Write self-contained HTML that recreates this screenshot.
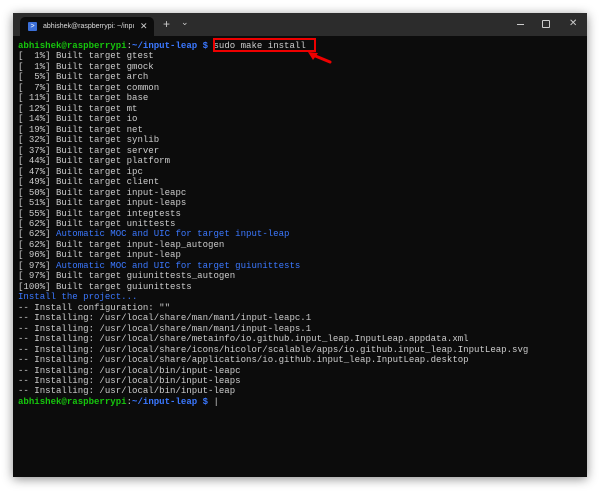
<!DOCTYPE html>
<html><head><style>
html,body{margin:0;padding:0;background:#fff;width:600px;height:492px;overflow:hidden}
.win{position:absolute;left:13px;top:13px;width:574px;height:464px;background:#0c0c0c;box-shadow:0 2px 10px rgba(0,0,0,.45);}
.tb{position:absolute;left:0;top:0;width:574px;height:23px;background:#2c2c2c}
.tab{position:absolute;left:7px;top:4px;width:134px;height:19px;background:#0c0c0c;border-radius:5px 5px 0 0;color:#ddd;font:7px "Liberation Sans",sans-serif;line-height:19px}
.tab .ic{position:absolute;left:8px;top:5px;width:9px;height:9px;background:#3b6fd8;border-radius:1px;color:#fff;font-size:7px;line-height:9px;text-align:center}
.tab .t{position:absolute;left:23px;top:0}
.tab .x{position:absolute;left:120px;top:0;font-size:9px;color:#ccc}
.plus{position:absolute;left:150px;top:4px;color:#ccc;font:12px "Liberation Sans",sans-serif}
.chev{position:absolute;left:168px;top:4px;color:#ccc;font:9px "Liberation Sans",sans-serif}
.ctl{position:absolute;color:#ccc;font:10px "Liberation Sans",sans-serif}
pre{position:absolute;left:5px;top:28px;margin:0;font:9.05px/10.47px "Liberation Mono",monospace;color:#cccccc}
.g{color:#16c60c;font-weight:bold}.b{color:#3b78ff;font-weight:bold}.bl{color:#3b78ff}
.box{position:absolute;left:213px;top:38px;width:103px;height:14px;border:2px solid #e00;box-sizing:border-box}
</style></head><body>
<div class="win">
<div class="tb">
<div class="tab"><div class="ic">&gt;</div><span class="t">abhishek@raspberrypi: ~/inpı</span><span class="x">✕</span></div>
<div class="plus">+</div><div class="chev">⌄</div>
<div style="position:absolute;left:504px;top:11px;width:7px;height:1px;background:#ccc"></div>
<div style="position:absolute;left:529px;top:7px;width:6px;height:6px;border:1px solid #ccc;border-radius:1px"></div>
<div class="ctl" style="left:556px;top:5px">✕</div>
</div>
<pre><span class="g">abhishek@raspberrypi</span>:<span class="b">~/input-leap $</span> sudo make install
[  1%] Built target gtest
[  1%] Built target gmock
[  5%] Built target arch
[  7%] Built target common
[ 11%] Built target base
[ 12%] Built target mt
[ 14%] Built target io
[ 19%] Built target net
[ 32%] Built target synlib
[ 37%] Built target server
[ 44%] Built target platform
[ 47%] Built target ipc
[ 49%] Built target client
[ 50%] Built target input-leapc
[ 51%] Built target input-leaps
[ 55%] Built target integtests
[ 62%] Built target unittests
[ 62%] <span class="bl">Automatic MOC and UIC for target input-leap</span>
[ 62%] Built target input-leap_autogen
[ 96%] Built target input-leap
[ 97%] <span class="bl">Automatic MOC and UIC for target guiunittests</span>
[ 97%] Built target guiunittests_autogen
[100%] Built target guiunittests
<span class="bl">Install the project...</span>
-- Install configuration: ""
-- Installing: /usr/local/share/man/man1/input-leapc.1
-- Installing: /usr/local/share/man/man1/input-leaps.1
-- Installing: /usr/local/share/metainfo/io.github.input_leap.InputLeap.appdata.xml
-- Installing: /usr/local/share/icons/hicolor/scalable/apps/io.github.input_leap.InputLeap.svg
-- Installing: /usr/local/share/applications/io.github.input_leap.InputLeap.desktop
-- Installing: /usr/local/bin/input-leapc
-- Installing: /usr/local/bin/input-leaps
-- Installing: /usr/local/bin/input-leap
<span class="g">abhishek@raspberrypi</span>:<span class="b">~/input-leap $</span> |</pre>
</div>
<div class="box"></div>
<svg style="position:absolute;left:303px;top:50px" width="30" height="16"><path d="M27 12 L10 5" stroke="#e00" stroke-width="3" stroke-linecap="round"/><path d="M5 2 L15 3 L10 10 Z" fill="#e00"/></svg>
</body></html>
